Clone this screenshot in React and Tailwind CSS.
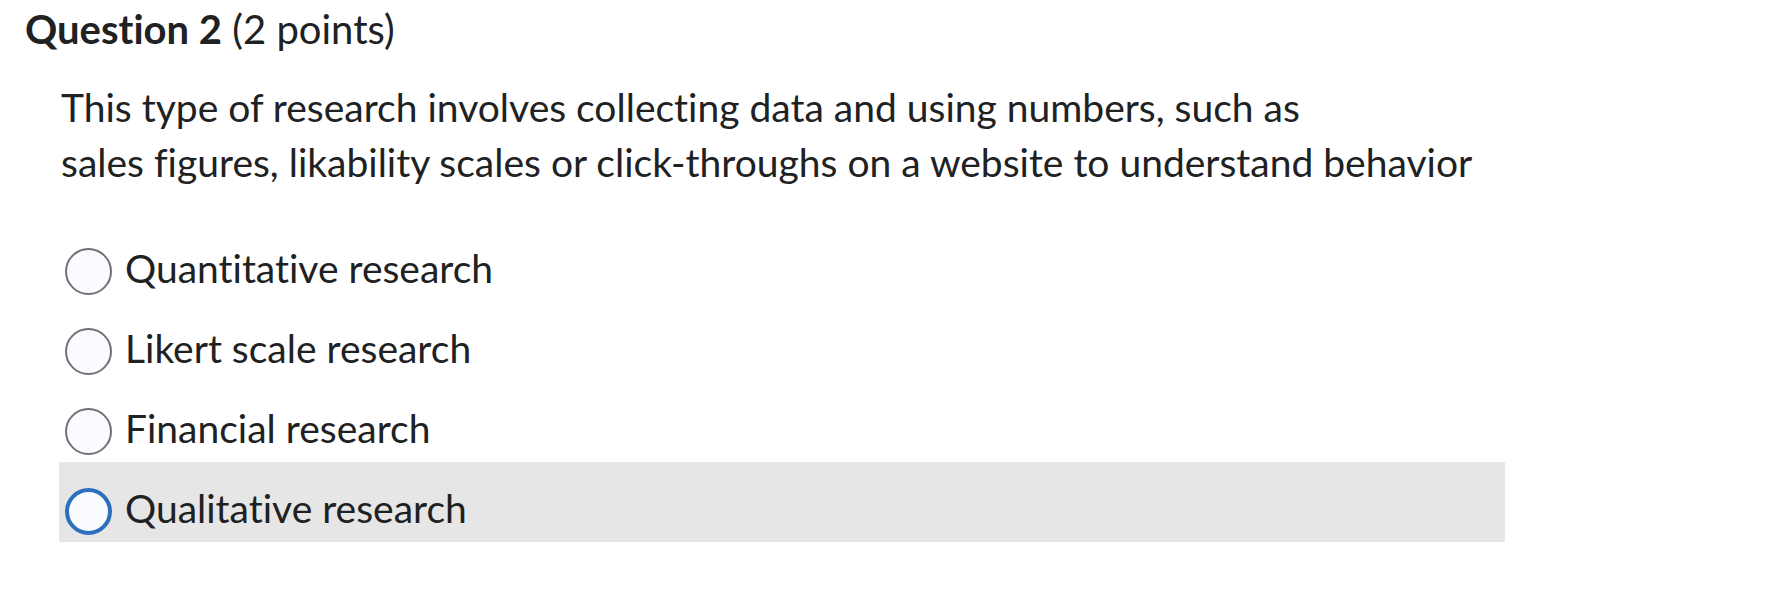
import React, { useState } from 'react';

const options = [
  'Quantitative research',
  'Likert scale research',
  'Financial research',
  'Qualitative research',
];

export default function App() {
  const [focused, setFocused] = useState(3);

  return (
    <div className="min-h-screen bg-white text-[#202122] font-['Lato',sans-serif] [font-variant-ligatures:none]">
      <h2 className="pl-[25px] text-[40px] leading-[1.15] pt-[6px]">
        <span className="font-bold">Question 2</span> (2 points)
      </h2>

      <div className="pl-[61px] pt-[28px]">
        <p className="text-[39px] leading-[55px]">
          This type of research involves collecting data and using numbers, such as
          <br />
          sales figures, likability scales or click-throughs on a website to understand behavior
        </p>

        <div className="mt-[32px] w-[1446px] -ml-[2px]">
          {options.map((o, i) => (
            <label
              key={o}
              onMouseEnter={() => setFocused(i)}
              className={`flex items-center h-[80px] pt-[18px] pl-[6px] gap-[13px] cursor-pointer ${
                focused === i ? 'bg-[#e6e6e6]' : ''
              }`}
            >
              <span
                className={`w-[47px] h-[47px] shrink-0 rounded-full bg-[#f9fbff] ${
                  focused === i ? 'border-[4px] border-[#2b6fbd]' : 'border-2 border-[#6f7173]'
                }`}
              />
              <span className="text-[39px] leading-[1.5] -mt-[5px]">{o}</span>
            </label>
          ))}
        </div>
      </div>
    </div>
  );
}
